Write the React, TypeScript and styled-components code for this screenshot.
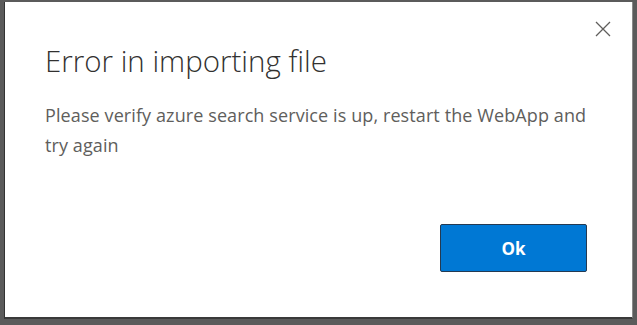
import React from "react";
import styled, {createGlobalStyle} from "styled-components";

const GlobalStyle = createGlobalStyle`
  html, body {
    margin: 0;
    padding: 0;
    background-color: #5b5b5b;
  }
`;

const Backdrop = styled.div`
  display: flex;
  width: 637px;
  height: 325px;
  padding: 2px 4px 6px 4px;
  box-sizing: border-box;
  background-color: #5b5b5b;
`;

const Dialog = styled.div`
  display: flex;
  flex-direction: column;
  flex-grow: 1;
  background-color: white;
  border-left: 1px solid #333;
  border-right: 1px solid #8a8a8a;
  border-bottom: 2px solid #3a3a3a;
  box-sizing: border-box;
  padding: 0 0 0 40px;
  font-family: "Open Sans", "Noto Sans", sans-serif;
`;

const Header = styled.div`
  display: flex;
  justify-content: space-between;
  align-items: flex-start;
`;

const Title = styled.h1`
  margin: 41px 0 0 0;
  font-size: 29.5px;
  font-weight: 300;
  line-height: 36px;
  color: #323130;
`;

const CloseButton = styled.button`
  display: flex;
  align-items: center;
  justify-content: center;
  margin: 11px 13px 0 0;
  width: 32px;
  height: 32px;
  padding: 0;
  border: none;
  background: transparent;
  cursor: pointer;
`;

const Message = styled.p`
  margin: 21px 0 0 0;
  width: 560px;
  font-size: 18px;
  letter-spacing: 0.1px;
  line-height: 30px;
  color: #605e5c;
`;

const Footer = styled.div`
  display: flex;
  justify-content: flex-end;
  margin-top: auto;
  padding: 0 45px 45px 0;
`;

const PrimaryButton = styled.button`
  width: 147px;
  height: 48px;
  border: 1px solid #243a52;
  border-radius: 2px;
  background-color: #0078d4;
  color: white;
  font-family: "Open Sans", "Noto Sans", sans-serif;
  font-size: 17px;
  font-weight: 700;
  cursor: pointer;
`;

const App: React.FC = () => {
    return (
        <Backdrop>
            <GlobalStyle/>
            <Dialog>
                <Header>
                    <Title>Error in importing file</Title>
                    <CloseButton aria-label="Close">
                        <svg width="16" height="16" viewBox="0 0 16 16">
                            <path d="M1 1 L15 15 M15 1 L1 15" stroke="#605e5c" strokeWidth="1.3" fill="none"/>
                        </svg>
                    </CloseButton>
                </Header>
                <Message>
                    Please verify azure search service is up, restart the WebApp and try again
                </Message>
                <Footer>
                    <PrimaryButton>Ok</PrimaryButton>
                </Footer>
            </Dialog>
        </Backdrop>
    );
}

export default App
